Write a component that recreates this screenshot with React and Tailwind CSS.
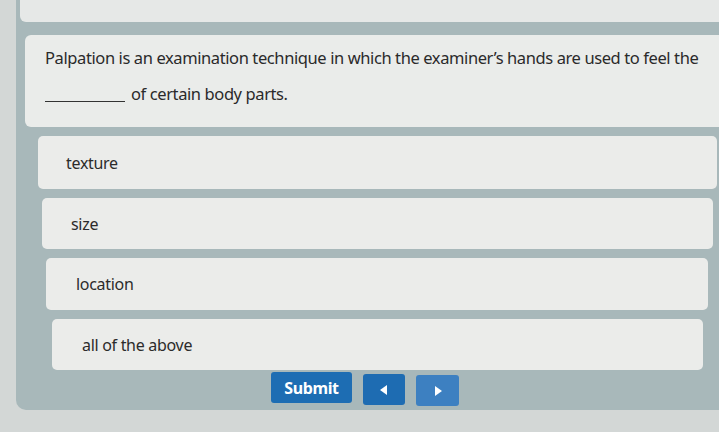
import React from 'react';

const options = [
  { label: 'texture', ml: 'ml-[22px]', mr: 'mr-[2px]', px: 'pl-[28px]', h: 'h-[53px]' },
  { label: 'size', ml: 'ml-[26px]', mr: 'mr-[6px]', px: 'pl-[29px]', h: 'h-[51px]' },
  { label: 'location', ml: 'ml-[30px]', mr: 'mr-[11px]', px: 'pl-[30px]', h: 'h-[52px]' },
  { label: 'all of the above', ml: 'ml-[36px]', mr: 'mr-[16px]', px: 'pl-[30px]', h: 'h-[51px]' },
];

const App = () => {
  return (
    <div className="w-[719px] h-[432px] overflow-hidden bg-[#d3d7d6] font-['Noto_Sans',sans-serif]">
      <div className="ml-[16px] h-[410px] bg-[#a8b8ba] rounded-bl-[10px] pt-0">
        <div className="ml-[4px] h-[22px] bg-[#e6e8e7] rounded-bl-[6px]" />
        <div className="ml-[9px] mt-[13px] h-[92px] bg-[#eaecea] rounded-l-[6px] pl-[20px] pt-[12px] text-[#2a2a2a] text-[16.5px] tracking-[-0.4px]">
          <p className="leading-[22px]">
            Palpation is an examination technique in which the examiner’s hands are used to feel the
          </p>
          <p className="mt-[14px] leading-[22px] flex items-end">
            <span className="inline-block w-[80px] border-b border-[#333] mr-[6px] mb-[3px]" />
            of certain body parts.
          </p>
        </div>
        <div className="flex flex-col gap-[9px] mt-[9px]">
          {options.map((o) => (
            <div
              key={o.label}
              className={`${o.ml} ${o.mr} ${o.h} ${o.px} bg-[#ebecea] rounded-[5px] flex items-center text-[#2b2b2b] text-[16px] tracking-[-0.3px]`}
            >
              {o.label}
            </div>
          ))}
        </div>
        <div className="flex items-start gap-[11px] ml-[255px] mt-[2px]">
          <button className="w-[81px] h-[31px] bg-[#1d6db3] rounded-[3px] text-white font-bold text-[16px] tracking-[-0.4px]">
            Submit
          </button>
          <button className="w-[42px] h-[31px] mt-[2px] bg-[#1e6cb2] rounded-[3px] flex items-center justify-center">
            <svg width="8" height="10" viewBox="0 0 8 10"><path d="M7 0v10L0 5z" fill="#fff" /></svg>
          </button>
          <button className="w-[43px] h-[31px] mt-[3px] bg-[#3d80c1] rounded-[3px] flex items-center justify-center">
            <svg width="8" height="10" viewBox="0 0 8 10"><path d="M1 0v10l7-5z" fill="#fff" /></svg>
          </button>
        </div>
      </div>
    </div>
  );
};

export default App;
